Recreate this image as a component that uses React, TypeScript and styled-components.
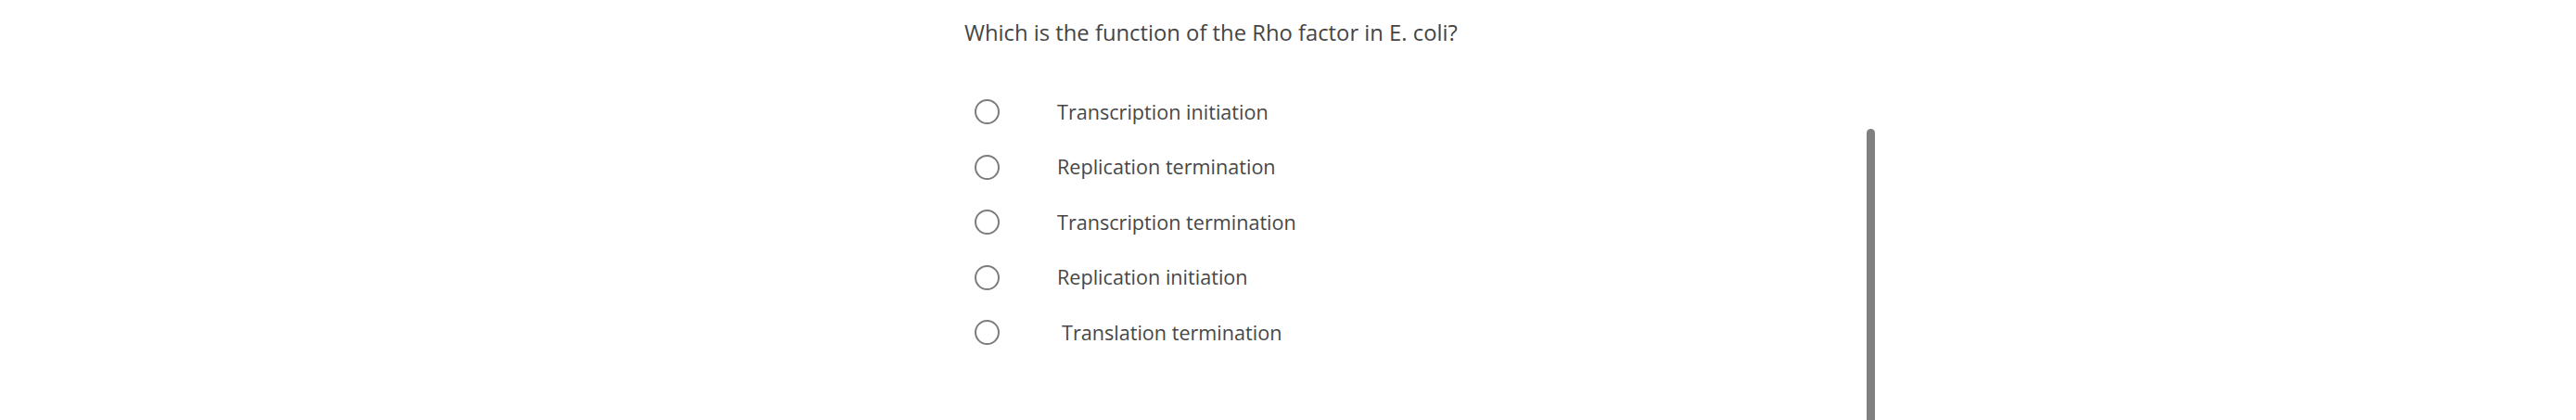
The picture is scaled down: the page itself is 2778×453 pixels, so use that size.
import styled, { createGlobalStyle } from "styled-components";

const GlobalStyle = createGlobalStyle`
  html,
  body {
    margin: 0;
    padding: 0;
    background: #ffffff;
  }

  body {
    font-family: "Open Sans", "Noto Sans", "DejaVu Sans", sans-serif;
    color: #454545;
  }
`;

const Page = styled.div`
  display: flex;
  width: 2778px;
  height: 453px;
  overflow: hidden;
  padding-left: 1040px;
  box-sizing: border-box;
`;

const Quiz = styled.section`
  width: 973px;
  display: flex;
  flex-direction: column;
`;

const Question = styled.h2`
  margin: 0;
  padding-top: 19px;
  font-size: 23.8px;
  font-weight: 400;
  line-height: 32px;
  color: #454545;
`;

const OptionList = styled.ul`
  list-style: none;
  margin: 0;
  padding: 0;
  padding-top: 40px;
  display: flex;
  flex-direction: column;
`;

const OptionRow = styled.li`
  height: 59.5px;
  display: flex;
  align-items: center;
  padding-left: 11px;
`;

const Radio = styled.span`
  width: 27px;
  height: 27px;
  border: 2.5px solid #7c7c7c;
  border-radius: 50%;
  box-sizing: border-box;
  flex-shrink: 0;
`;

const OptionLabel = styled.span<{ $indent: number }>`
  margin-left: ${({ $indent }) => 62 + $indent}px;
  font-size: 21.6px;
  line-height: 28px;
  color: #474747;
  white-space: pre;
`;

const ScrollTrack = styled.div`
  width: 9px;
  padding-top: 139px;
  display: flex;
`;

const ScrollThumb = styled.div`
  flex: 1;
  background: #808080;
  border-radius: 5px 5px 0 0;
`;

const options = [
  { label: "Transcription initiation", indent: 0 },
  { label: "Replication termination", indent: 0 },
  { label: "Transcription termination", indent: 0 },
  { label: "Replication initiation", indent: 0 },
  { label: "Translation termination", indent: 5 },
];

export default function App() {
  return (
    <>
      <GlobalStyle />
      <Page>
        <Quiz>
          <Question>Which is the function of the Rho factor in E. coli?</Question>
          <OptionList>
            {options.map((option) => (
              <OptionRow key={option.label}>
                <Radio />
                <OptionLabel $indent={option.indent}>{option.label}</OptionLabel>
              </OptionRow>
            ))}
          </OptionList>
        </Quiz>
        <ScrollTrack>
          <ScrollThumb />
        </ScrollTrack>
      </Page>
    </>
  );
}
